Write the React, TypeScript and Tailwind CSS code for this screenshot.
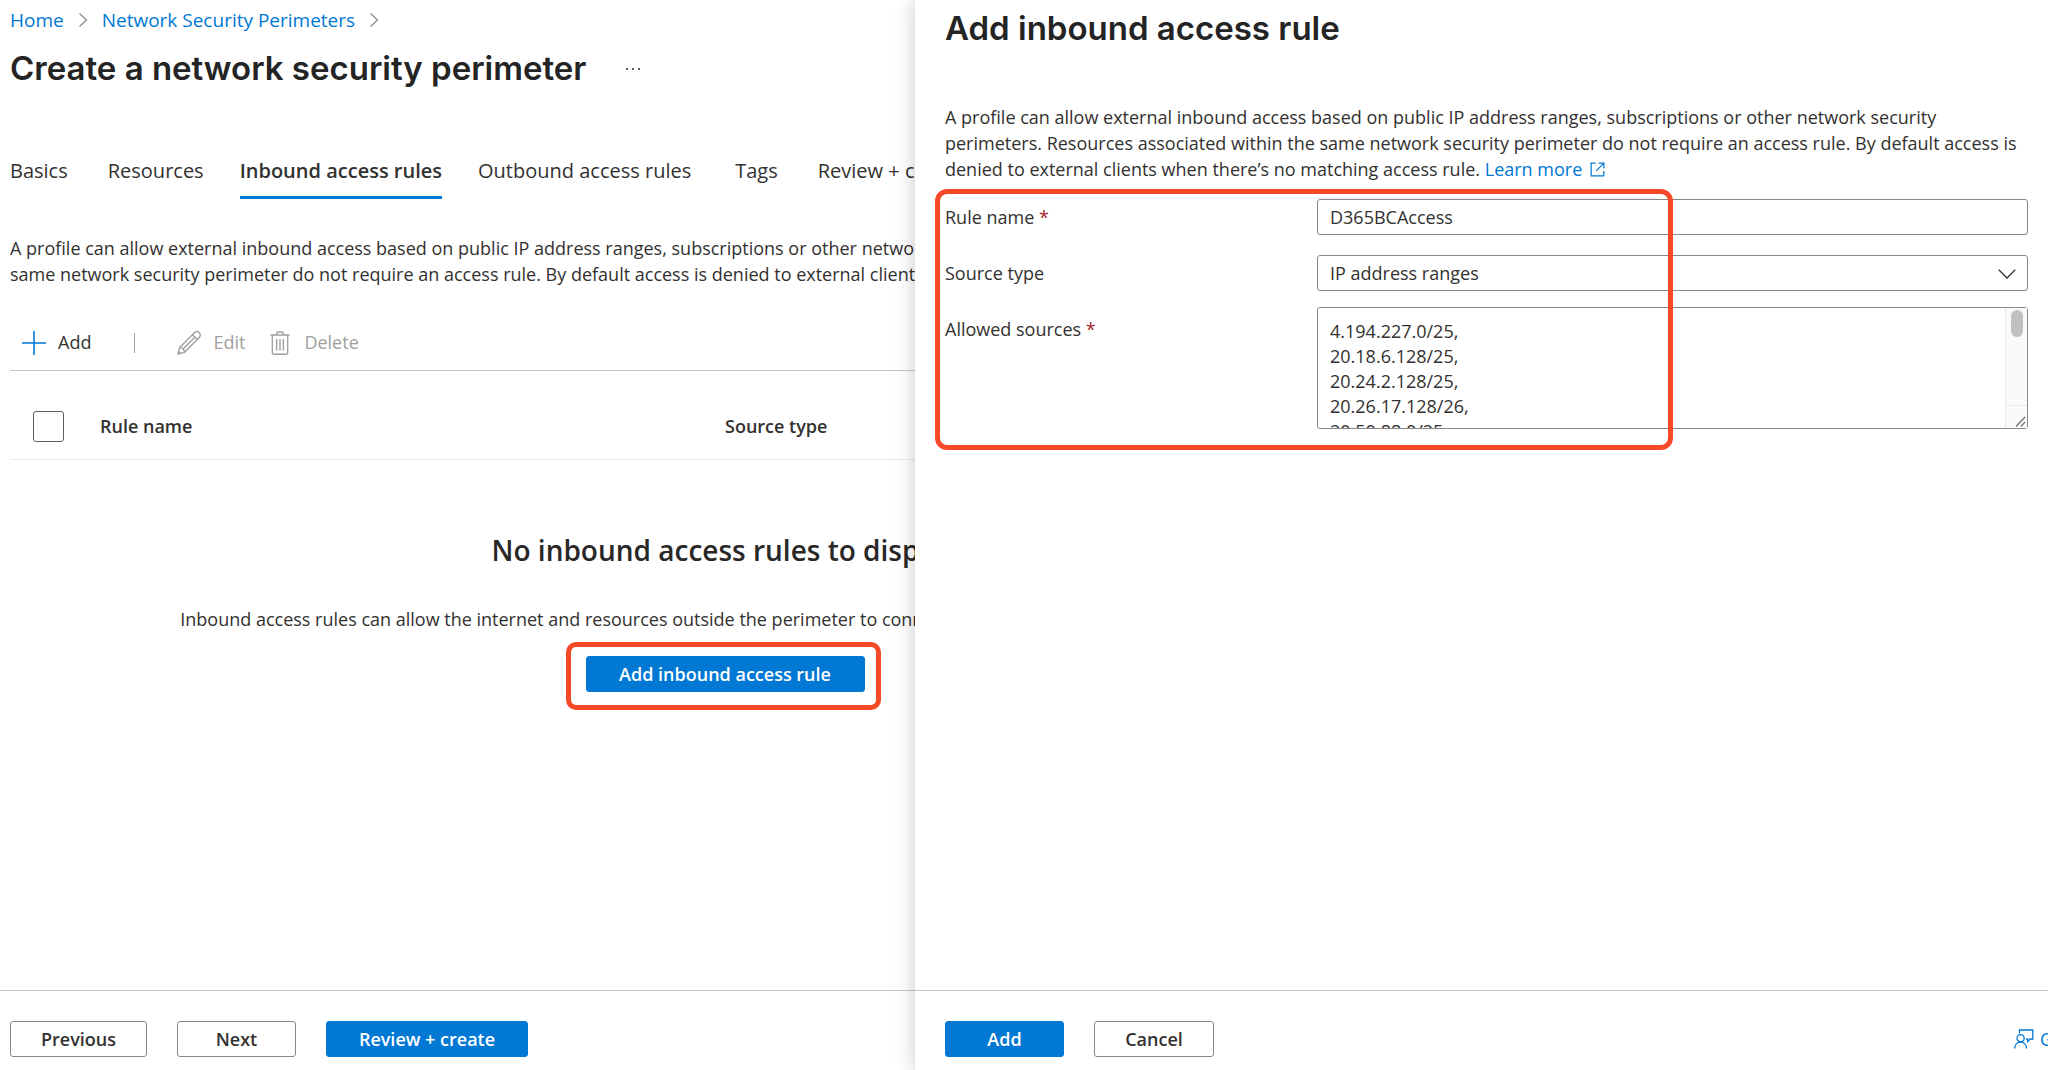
import type { ReactNode } from "react";

const allowedSources = [
  "4.194.227.0/25,",
  "20.18.6.128/25,",
  "20.24.2.128/25,",
  "20.26.17.128/26,",
  "20.50.88.0/25,",
  "20.51.16.0/25,",
].join("\n");

const tabs = ["Basics", "Resources", "Inbound access rules", "Outbound access rules", "Tags", "Review + create"];
const tabGaps = ["mr-10", "mr-9", "mr-9", "mr-11", "mr-10", ""];

function Crumb() {
  return (
    <svg aria-hidden="true" className="h-4 w-2.5 text-[#8a8886]" viewBox="0 0 10 16" fill="none" stroke="currentColor" strokeWidth="1.2">
      <path d="M1.5 1.5 8.5 8l-7 6.5" />
    </svg>
  );
}

function PlusIcon() {
  return (
    <svg aria-hidden="true" className="size-6 text-[#0078d4]" viewBox="0 0 24 24" stroke="currentColor" strokeWidth="1.6">
      <path d="M12 0v24M0 12h24" />
    </svg>
  );
}

function PencilIcon() {
  return (
    <svg aria-hidden="true" className="size-6" viewBox="0 0 24 24" fill="none" stroke="currentColor" strokeWidth="1.4" strokeLinejoin="round">
      <path d="M.9 23.1 2.6 16.6 17.4 1.8a3.3 3.3 0 0 1 4.8 4.8L7.4 21.4z" />
      <path d="M15.4 3.8 20.2 8.6M2.6 16.6c2.6-.2 4.9 2.1 4.8 4.8M17.8 6.2 5.6 18.4M1.6 20.4l2 2" />
    </svg>
  );
}

function TrashIcon() {
  return (
    <svg aria-hidden="true" className="h-6 w-5" viewBox="0 0 20 24" fill="none" stroke="currentColor" strokeWidth="1.4">
      <path d="M.5 4h19M6.7 4V2.2a1.2 1.2 0 0 1 1.2-1.2h4.2a1.2 1.2 0 0 1 1.2 1.2V4M2.3 4v17.6a1.7 1.7 0 0 0 1.7 1.7h12a1.7 1.7 0 0 0 1.7-1.7V4M6.6 8v11.5M10 8v11.5M13.4 8v11.5" />
    </svg>
  );
}

function ExternalIcon() {
  return (
    <svg aria-hidden="true" className="ml-2 inline size-[15px] align-[-1px]" viewBox="0 0 16 16" fill="none" stroke="currentColor" strokeWidth="1.3">
      <path d="M6 1.3H1.2v13.5h13.5V9.5M9.3 1.2h5.5v5.5M14.6 1.4 6.6 9.4" />
    </svg>
  );
}

function FeedbackIcon() {
  return (
    <svg aria-hidden="true" className="h-5 w-5 shrink-0" viewBox="0 0 20 20" fill="none" stroke="currentColor" strokeWidth="1.3">
      <path d="M5.5 4.5V1h13.3v9h-2.6l-2.6 2.6V10h-1.4" />
      <circle cx="6.6" cy="9.2" r="3.6" />
      <path d="M.7 19.6c0-3.9 2.5-6.6 5.9-6.6s5.9 2.7 5.9 6.6" />
    </svg>
  );
}

function Button({ primary, width, children }: { primary?: boolean; width: string; children: ReactNode }) {
  const look = primary
    ? "border-[#0078d4] bg-[#0078d4] text-white"
    : "border-[#8a8886] bg-white text-[#323130]";
  return (
    <button type="button" className={`h-9 rounded-[3px] border font-semibold leading-6 ${width} ${look}`}>
      {children}
    </button>
  );
}

function CreatePage() {
  return (
    <div className="flex min-h-screen w-[1440px] flex-col">
      <main className="grow pl-2.5">
        <nav aria-label="Breadcrumb" className="flex h-10 items-center gap-3.5 text-[19px] text-[#0078d4]">
          <a href="#home">Home</a>
          <Crumb />
          <a href="#perimeters">Network Security Perimeters</a>
          <Crumb />
        </nav>

        <div className="flex h-[58px] items-center gap-10">
          <h1 className="font-[Inter] text-[33px] font-semibold text-[#242424]">Create a network security perimeter</h1>
          <button type="button" aria-label="More" className="flex gap-1">
            <span className="size-0.5 bg-[#605e5c]" />
            <span className="size-0.5 bg-[#605e5c]" />
            <span className="size-0.5 bg-[#605e5c]" />
          </button>
        </div>

        <div role="tablist" className="mt-12 flex h-[53px] text-[20px]">
          {tabs.map((tab, i) => {
            const active = i === 2;
            return (
              <button
                key={tab}
                type="button"
                role="tab"
                aria-selected={active}
                className={`h-[53px] shrink-0 border-b-3 text-left ${tabGaps[i]} ${active ? "border-[#0078d4] font-semibold" : "border-transparent"}`}
              >
                {tab}
              </button>
            );
          })}
        </div>

        <p className="mt-9 max-w-[1410px] leading-[26px]">
          A profile can allow external inbound access based on public IP address ranges, subscriptions or other network
          security perimeters. Resources associated within the same network security perimeter do not require an access
          rule. By default access is denied to external clients when there’s no matching access rule.
        </p>

        <div role="toolbar" className="mt-7 flex h-[56px] items-center border-b border-[#c8c6c4] pl-3">
          <button type="button" className="flex items-center gap-3">
            <PlusIcon />
            Add
          </button>
          <span className="ml-[43px] h-5 w-px bg-[#a19f9d]" />
          <button type="button" disabled className="ml-[42px] flex items-center gap-3 text-[#a19f9d]">
            <PencilIcon />
            Edit
          </button>
          <button type="button" disabled className="ml-[25px] flex items-center gap-3.5 text-[#a19f9d]">
            <TrashIcon />
            Delete
          </button>
        </div>

        <table className="w-full table-fixed text-left">
          <thead>
            <tr className="h-[88px] border-b border-[#edebe9]">
              <th className="w-[90px] pt-6 pl-[23px]">
                <input
                  type="checkbox"
                  aria-label="Select all rules"
                  className="block size-[31px] appearance-none rounded-[3px] border border-[#605e5c] bg-white"
                />
              </th>
              <th className="w-[625px] pt-6 font-semibold">Rule name</th>
              <th className="pt-6 font-semibold">Source type</th>
            </tr>
          </thead>
        </table>

        <section className="flex flex-col items-center">
          <h2 className="mt-[70px] text-[28px] leading-10 font-semibold text-[#292827]">No inbound access rules to display</h2>
          <p className="mt-9 leading-[26px]">
            Inbound access rules can allow the internet and resources outside the perimeter to connect to the resources
            inside the perimeter.
          </p>
          <div className="relative mt-6">
            <Button primary width="w-[279px]">Add inbound access rule</Button>
            <div className="pointer-events-none absolute -top-3.5 -right-4 -bottom-4.5 -left-5 rounded-[10px] border-5 border-[#f54927]" />
          </div>
        </section>
      </main>

      <footer className="flex h-20 items-start gap-[30px] border-t border-[#c8c6c4] pt-[30px] pl-2.5">
        <Button width="w-[137px]">Previous</Button>
        <Button width="w-[119px]">Next</Button>
        <Button primary width="w-[202px]">Review + create</Button>
      </footer>
    </div>
  );
}

function Required() {
  return <span className="text-[#a4262c]"> *</span>;
}

function RulePanel() {
  return (
    <aside className="relative z-10 flex w-[1133px] shrink-0 flex-col bg-white shadow-[0_0_20px_rgba(0,0,0,0.22)]">
      <div className="grow px-[30px]">
        <h1 className="pt-2 font-[Inter] text-[33px] leading-10 font-semibold text-[#242424]">Add inbound access rule</h1>
        <p className="-mr-2.5 mt-14 leading-[26px]">
          A profile can allow external inbound access based on public IP address ranges, subscriptions or other network
          security perimeters. Resources associated within the same network security perimeter do not require an access
          rule. By default access is denied to external clients when there’s no matching access rule.{" "}
          <a href="#learn" className="whitespace-nowrap text-[#0078d4]">
            Learn more
            <ExternalIcon />
          </a>
        </p>

        <form className="relative mt-[17px] -mr-2.5 grid grid-cols-[372px_1fr] items-start leading-9">
          <label htmlFor="rule-name" className="h-14">
            Rule name
            <Required />
          </label>
          <input
            id="rule-name"
            type="text"
            defaultValue="D365BCAccess"
            className="h-9 rounded-[3px] border border-[#8a8886] bg-white px-3"
          />

          <label htmlFor="source-type" className="h-14">Source type</label>
          <div className="relative">
            <select
              id="source-type"
              className="block h-9 w-full appearance-none rounded-[3px] border border-[#8a8886] bg-white px-3 leading-6"
            >
              <option>IP address ranges</option>
            </select>
            <svg
              aria-hidden="true"
              className="pointer-events-none absolute top-3.5 right-3 h-2.5 w-[18px] text-[#323130]"
              viewBox="0 0 18 10"
              fill="none"
              stroke="currentColor"
              strokeWidth="1.3"
            >
              <path d="M.8.8 9 9 17.2.8" />
            </svg>
          </div>

          <label htmlFor="allowed-sources">
            Allowed sources
            <Required />
          </label>
          <div className="relative -mt-1">
            <textarea
              id="allowed-sources"
              defaultValue={allowedSources}
              className="block h-[122px] w-full resize-none overflow-hidden rounded-[3px] border border-[#8a8886] bg-white px-3 pt-[11px] leading-[25px]"
            />
            <div aria-hidden="true" className="absolute inset-y-px right-px flex w-[22px] flex-col border-l border-[#e8e8e8] bg-[#fafafa]">
              <div className="grow border-b border-[#e8e8e8] pt-0.5">
                <div className="mx-auto h-[27px] w-3 rounded-full bg-[#c1c1c1]" />
              </div>
              <svg className="h-[22px] w-full" viewBox="0 0 21 22" stroke="#6e6e6e" strokeWidth="1.2">
                <path d="M10 20.5 19 11M15 20.5l4-4.5" />
              </svg>
            </div>
          </div>

          <div className="pointer-events-none absolute -top-2.5 right-[355px] -bottom-[21px] -left-2.5 rounded-[12px] border-5 border-[#f54927]" />
        </form>
      </div>

      <footer className="flex h-20 items-start gap-[30px] overflow-hidden border-t border-[#c8c6c4] pt-[30px] pl-[30px]">
        <Button primary width="w-[119px]">Add</Button>
        <Button width="w-[120px]">Cancel</Button>
        <a href="#feedback" className="-mr-[110px] ml-auto flex h-9 w-[144px] shrink-0 items-center gap-1.5 whitespace-nowrap text-[#0078d4]">
          <FeedbackIcon />
          Give feedback
        </a>
      </footer>
    </aside>
  );
}

export default function App() {
  return (
    <div className="flex min-h-screen overflow-hidden bg-white font-['Open_Sans',sans-serif] text-[18px] text-[#323130]">
      <div className="min-w-0 flex-1 overflow-hidden">
        <CreatePage />
      </div>
      <RulePanel />
    </div>
  );
}
